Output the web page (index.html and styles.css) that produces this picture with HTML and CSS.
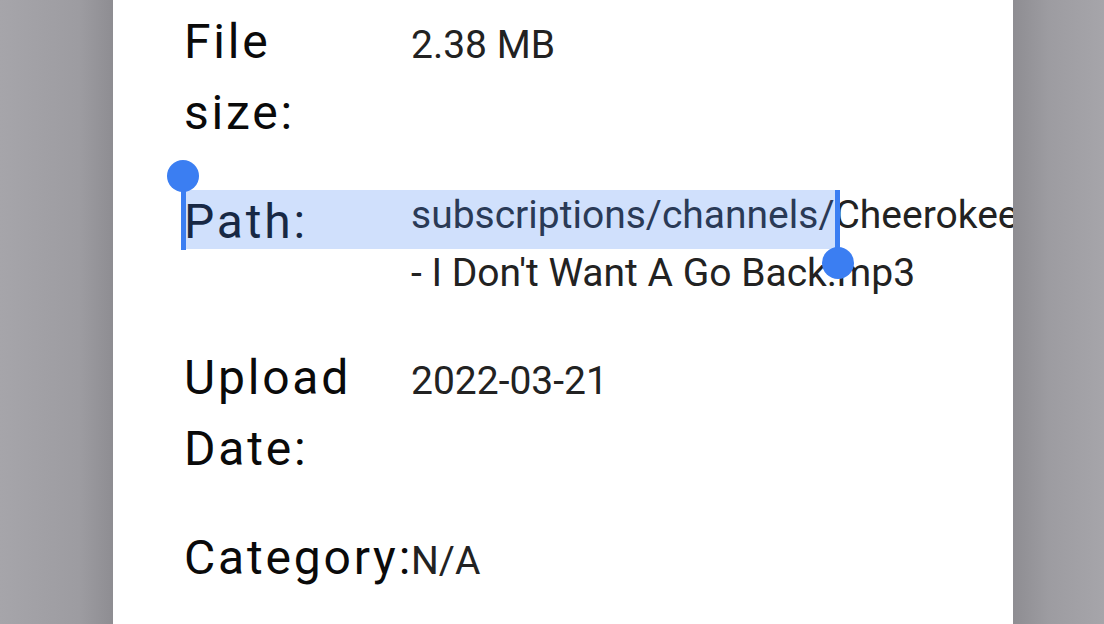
FILE: index.html
```html
<!DOCTYPE html>
<html lang="en">
<head>
<meta charset="utf-8">
<title>File details</title>
<link rel="stylesheet" href="styles.css">
</head>
<body>
<div class="gutter gutter-left"></div>
<main class="panel">
  <div class="rows">
    <div class="row">
      <div class="label">File size:</div>
      <div class="value">2.38 MB</div>
    </div>
    <div class="row row-top">
      <div class="label">Path:</div>
      <div class="value value-wrap"><span class="nowrap">subscriptions/channels/Cheerokee</span> - I Don't Want A Go Back.mp3</div>
    </div>
    <div class="row">
      <div class="label">Upload Date:</div>
      <div class="value">2022-03-21</div>
    </div>
    <div class="row">
      <div class="label">Category:</div>
      <div class="value">N/A</div>
    </div>
  </div>
  <div class="selection"></div>
  <div class="handle-line handle-line-start"></div>
  <div class="handle-dot handle-dot-start"></div>
  <div class="handle-line handle-line-end"></div>
  <div class="handle-dot handle-dot-end"></div>
</main>
<div class="gutter gutter-right"></div>
</body>
</html>
```

FILE: styles.css
```css
html, body {
  margin: 0;
  padding: 0;
  height: 624px;
  overflow: hidden;
}
body {
  display: flex;
  font-family: Roboto, "Noto Sans", sans-serif;
  background: #9a999e;
}
.gutter {
  width: 113px;
  flex: 0 0 auto;
}
.gutter-left {
  background: linear-gradient(to right, #a6a5aa 0%, #9d9ca1 70%, #8e8d92 100%);
}
.gutter-right {
  width: 91px;
  background: linear-gradient(to right, #8e8d92 0%, #9d9ca1 40%, #a6a5aa 100%);
}
.panel {
  position: relative;
  width: 900px;
  flex: 0 0 900px;
  background: #ffffff;
  overflow: hidden;
  box-sizing: border-box;
  padding: 6px 0 0 71px;
}
.rows {
  display: flex;
  flex-direction: column;
  gap: 38px;
}
.row {
  display: grid;
  grid-template-columns: 199px 1fr;
  column-gap: 28px;
  align-items: baseline;
}
.row-top {
  align-items: start;
}
.label {
  font-size: 48px;
  line-height: 71px;
  letter-spacing: 2.8px;
  color: #0a0a0a;
}
.value {
  font-size: 39px;
  line-height: 49px;
  padding-bottom: 6px;
  color: #222222;
}
.value-wrap {
  line-height: 58px;
  padding-bottom: 2px;
}
.nowrap {
  white-space: nowrap;
}
.selection {
  position: absolute;
  left: 73px;
  top: 190px;
  width: 650px;
  height: 59px;
  background: rgba(66, 133, 244, 0.25);
}
.handle-line {
  position: absolute;
  width: 5px;
  background: #3b7ef2;
}
.handle-line-start {
  left: 68px;
  top: 176px;
  height: 74px;
}
.handle-line-end {
  left: 722px;
  top: 190px;
  height: 73px;
}
.handle-dot {
  position: absolute;
  width: 32px;
  height: 32px;
  border-radius: 50%;
  background: #3b7ef2;
}
.handle-dot-start {
  left: 54px;
  top: 160px;
}
.handle-dot-end {
  left: 709px;
  top: 247px;
}
```
